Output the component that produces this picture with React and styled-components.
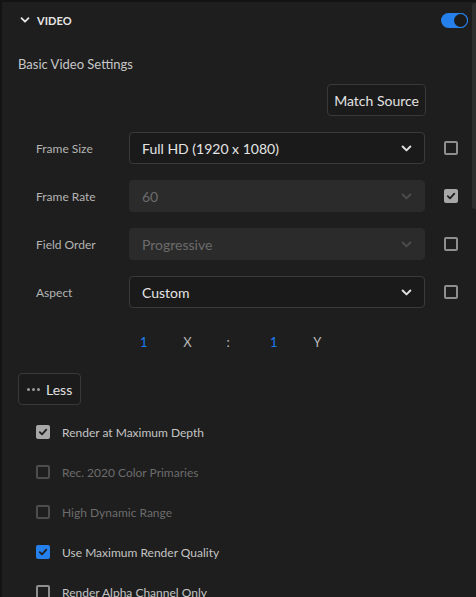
import React, { useState } from "react";
import styled, { createGlobalStyle } from "styled-components";

const GlobalStyle = createGlobalStyle`
  html, body {
    margin: 0;
    padding: 0;
    background: #1e1e1e;
    overflow: hidden;
  }
  * { box-sizing: border-box; }
`;

const Frame = styled.div`
  width: 476px;
  height: 597px;
  background: #131313;
  padding: 2px 0 0 2px;
  font-family: Lato, "Open Sans", sans-serif;
  position: relative;
  overflow: hidden;
`;

const Panel = styled.div`
  height: 100%;
  background: #1e1e1e;
  padding: 0 0 0 16px;
`;

const Scrollbar = styled.div`
  position: absolute;
  right: 0;
  top: 3px;
  width: 4px;
  height: 206px;
  background: #2e2e2e;
  border-radius: 3px 0 0 3px;
`;

const Header = styled.div`
  display: flex;
  align-items: center;
  height: 36px;
  padding-right: 8px;
  padding-left: 2px;
`;

const HeaderTitle = styled.span`
  flex: 1;
  margin-left: 7px;
  font-size: 11px;
  font-weight: 700;
  color: #e6e6e6;
  letter-spacing: 0.1px;
`;

const Toggle = styled.div`
  width: 27px;
  height: 15px;
  border-radius: 8px;
  background: #2680eb;
  position: relative;
  &::after {
    content: "";
    position: absolute;
    right: 1px;
    top: 1px;
    width: 13px;
    height: 13px;
    border-radius: 50%;
    background: #1b1b1b;
    box-shadow: 0 0 0 1px #2680eb;
  }
`;

const SectionTitle = styled.div`
  margin-top: 18px;
  font-size: 13px;
  color: #c6c6c6;
`;

const ButtonRow = styled.div`
  display: flex;
  justify-content: flex-end;
  padding-right: 50px;
  margin-top: 12px;
`;

const OutlineButton = styled.button`
  height: 32px;
  padding: 0 ${(p) => (p.$wide ? 8 : 6)}px;
  background: #1b1b1b;
  border: 1px solid #393939;
  border-radius: 4px;
  color: #e2e2e2;
  font-family: inherit;
  font-size: 14px;
  display: flex;
  align-items: center;
  gap: 6px;
`;

const Rows = styled.div`
  display: flex;
  flex-direction: column;
  gap: 16px;
  margin-top: 16px;
  padding-left: 18px;
`;

const Row = styled.div`
  display: flex;
  align-items: center;
  height: 32px;
`;

const Label = styled.span`
  width: 93px;
  font-size: 12px;
  color: #b4b4b4;
`;

const Select = styled.div`
  width: 296px;
  height: 32px;
  border-radius: 4px;
  display: flex;
  align-items: center;
  justify-content: space-between;
  padding: 0 12px 0 12px;
  font-size: 14px;
  background: ${(p) => (p.$disabled ? "#2b2b2b" : "#1a1a1a")};
  border: 1px solid ${(p) => (p.$disabled ? "#2b2b2b" : "#3a3a3a")};
  color: ${(p) => (p.$disabled ? "#6b6b6b" : "#e4e4e4")};
`;

const Box = styled.span`
  width: 14px;
  height: 14px;
  border-radius: 2px;
  flex-shrink: 0;
  display: inline-flex;
  align-items: center;
  justify-content: center;
  border: 2px solid ${(p) => p.$border};
  background: ${(p) => p.$fill || "transparent"};
`;

const RowBox = styled.div`
  margin-left: 19px;
  display: flex;
`;

const RatioRow = styled.div`
  display: flex;
  height: 32px;
  align-items: center;
  margin-top: 18px;
  padding-left: 122px;
  font-size: 13px;
  color: #b8b8b8;
`;

const RatioItem = styled.span`
  width: 43.3px;
  color: ${(p) => (p.$blue ? "#1a7ef2" : "#b8b8b8")};
`;

const LessWrap = styled.div`
  margin-top: 15px;
  display: flex;
`;

const Dots = styled.span`
  display: flex;
  gap: 2px;
  span {
    width: 3px;
    height: 3px;
    border-radius: 50%;
    background: #9a9a9a;
  }
`;

const Checks = styled.div`
  margin-top: 19px;
  padding-left: 18px;
  display: flex;
  flex-direction: column;
  gap: 24px;
`;

const CheckRow = styled.label`
  display: flex;
  align-items: center;
  gap: 12px;
  height: 16px;
  font-size: 12px;
  color: ${(p) => (p.$disabled ? "#6c6c6c" : "#c4c4c4")};
`;

const Chevron = ({ color = "#e6e6e6", size = 10 }) => (
  <svg width={size} height={size} viewBox="0 0 10 10">
    <path d="M1.5 3.2 L5 6.7 L8.5 3.2" fill="none" stroke={color} strokeWidth="1.8" strokeLinecap="round" strokeLinejoin="round" />
  </svg>
);

const Tick = ({ color = "#1e1e1e" }) => (
  <svg width="10" height="10" viewBox="0 0 10 10">
    <path d="M1.8 5.2 L4 7.3 L8.3 2.6" fill="none" stroke={color} strokeWidth="1.8" strokeLinecap="round" strokeLinejoin="round" />
  </svg>
);

const Checkbox = ({ state }) => {
  if (state === "gray") return <Box $border="#a8a8a8" $fill="#a8a8a8"><Tick /></Box>;
  if (state === "blue") return <Box $border="#2680eb" $fill="#2680eb"><Tick /></Box>;
  if (state === "off") return <Box $border="#4c4c4c" />;
  return <Box $border="#8e8e8e" />;
};

const settings = [
  { label: "Frame Size", value: "Full HD (1920 x 1080)", box: "empty" },
  { label: "Frame Rate", value: "60", disabled: true, box: "gray" },
  { label: "Field Order", value: "Progressive", disabled: true, box: "empty" },
  { label: "Aspect", value: "Custom", box: "empty" },
];

const options = [
  { label: "Render at Maximum Depth", box: "gray" },
  { label: "Rec. 2020 Color Primaries", box: "off", disabled: true },
  { label: "High Dynamic Range", box: "off", disabled: true },
  { label: "Use Maximum Render Quality", box: "blue" },
  { label: "Render Alpha Channel Only", box: "empty" },
];

export default function App() {
  const [open] = useState(true);
  return (
    <>
      <GlobalStyle />
      <Frame>
        <Panel>
          <Header>
            <Chevron />
            <HeaderTitle>VIDEO</HeaderTitle>
            <Toggle />
          </Header>
          {open && (
            <>
              <SectionTitle>Basic Video Settings</SectionTitle>
              <ButtonRow>
                <OutlineButton>Match Source</OutlineButton>
              </ButtonRow>
              <Rows>
                {settings.map((s) => (
                  <Row key={s.label}>
                    <Label>{s.label}</Label>
                    <Select $disabled={s.disabled}>
                      <span>{s.value}</span>
                      <Chevron color={s.disabled ? "#4c4c4c" : "#e0e0e0"} size={11} />
                    </Select>
                    <RowBox>
                      <Checkbox state={s.box} />
                    </RowBox>
                  </Row>
                ))}
              </Rows>
              <RatioRow>
                <RatioItem $blue>1</RatioItem>
                <RatioItem>X</RatioItem>
                <RatioItem>:</RatioItem>
                <RatioItem $blue>1</RatioItem>
                <RatioItem>Y</RatioItem>
              </RatioRow>
              <LessWrap>
                <OutlineButton $wide>
                  <Dots><span /><span /><span /></Dots>
                  Less
                </OutlineButton>
              </LessWrap>
              <Checks>
                {options.map((o) => (
                  <CheckRow key={o.label} $disabled={o.disabled}>
                    <Checkbox state={o.box} />
                    {o.label}
                  </CheckRow>
                ))}
              </Checks>
            </>
          )}
        </Panel>
        <Scrollbar />
      </Frame>
    </>
  );
}
